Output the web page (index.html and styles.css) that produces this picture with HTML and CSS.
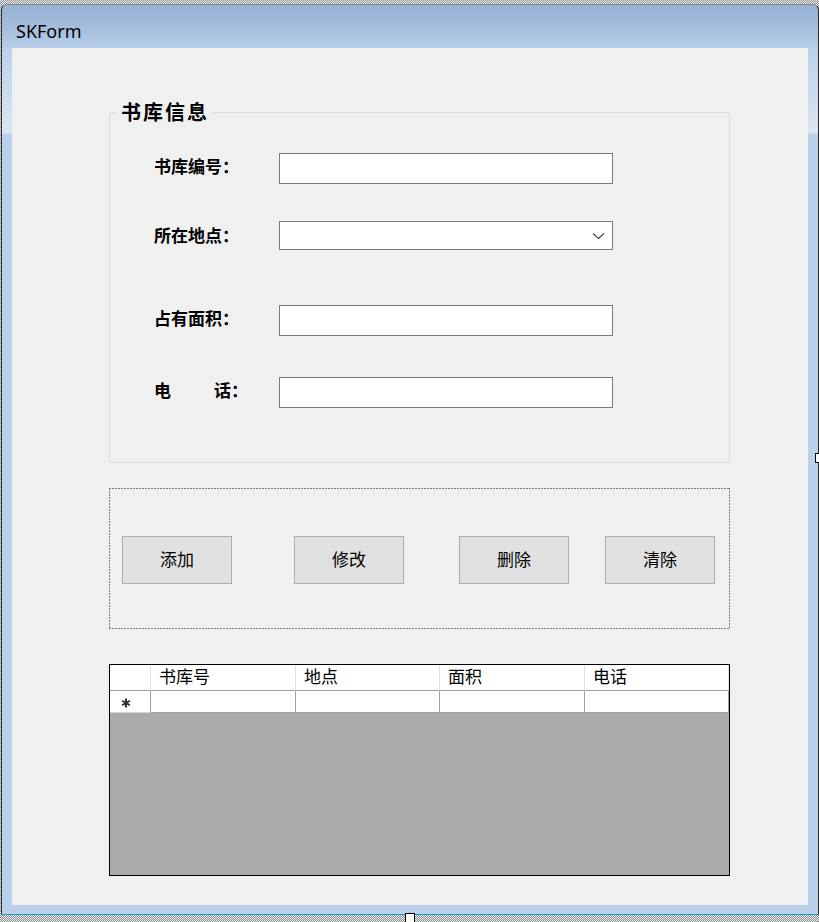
FILE: index.html
```html
<!DOCTYPE html>
<html lang="zh-CN">
<head>
<meta charset="utf-8">
<title>SKForm</title>
<link rel="stylesheet" href="styles.css">
</head>
<body>
<div class="window">
  <div class="titlebar">SKForm</div>
  <div class="client">
    <fieldset class="group">
      <legend>书库信息</legend>
      <div class="row r1">
        <label class="lbl">书库编号<span class="colon">：</span></label>
        <input class="txt" type="text">
      </div>
      <div class="row r2">
        <label class="lbl">所在地点<span class="colon">：</span></label>
        <div class="combo">
          <svg class="chev" width="13" height="8" viewBox="0 0 13 8"><path d="M1 1.5 L6.5 6.5 L12 1.5" fill="none" stroke="#444" stroke-width="1.1"/></svg>
        </div>
      </div>
      <div class="row r3">
        <label class="lbl">占有面积<span class="colon">：</span></label>
        <input class="txt" type="text">
      </div>
      <div class="row r4">
        <label class="lbl">电<span class="gap"></span>话<span class="colon">：</span></label>
        <input class="txt" type="text">
      </div>
    </fieldset>

    <div class="actions">
      <button class="btn">添加</button>
      <button class="btn b2">修改</button>
      <button class="btn b3">删除</button>
      <button class="btn b4">清除</button>
    </div>

    <div class="grid">
      <div class="grow head">
        <div class="cell rh"></div>
        <div class="cell w145">书库号</div>
        <div class="cell w144">地点</div>
        <div class="cell w145">面积</div>
        <div class="cell w144">电话</div>
      </div>
      <div class="grow data">
        <div class="cell rh"><svg width="10" height="10" viewBox="0 0 10 10"><g stroke="#333" stroke-width="2" stroke-linecap="butt"><path d="M5 0.5 V9.5"/><path d="M1.1 2.75 L8.9 7.25"/><path d="M1.1 7.25 L8.9 2.75"/></g></svg></div>
        <div class="cell w145"></div>
        <div class="cell w144"></div>
        <div class="cell w145"></div>
        <div class="cell w144"></div>
      </div>
    </div>
  </div>
</div>
<div class="handle-bottom"></div>
<div class="handle-right"></div>
</body>
</html>
```
FILE: styles.css
```css
html, body {
  margin: 0;
  padding: 0;
}
body {
  width: 819px;
  height: 922px;
  overflow: hidden;
  position: relative;
  background: repeating-conic-gradient(#8a8a8a 0 25%, #f2f2f2 0 50%) 0 0 / 2px 2px;
  font-family: "Noto Sans CJK SC", sans-serif;
  color: #000;
}
.window {
  box-sizing: border-box;
  margin: 4px 0 0 1px;
  width: 818px;
  height: 911px;
  border: 1px solid #2a2a2a;
  border-top-color: #7b8796;
  border-bottom-color: #1f9bd0;
  border-radius: 6px 6px 0 0;
  background: linear-gradient(to bottom,
    #98b3d2 0, #a3bddb 22px, #b6cee8 42px, #bbd2ea 44px,
    #dbe6f3 128px, #b9d1ea 129px, #b9d1ea 100%);
  display: flex;
  flex-direction: column;
}
.titlebar {
  box-sizing: border-box;
  height: 43px;
  padding: 14px 0 0 14px;
  font-family: "Noto Sans", sans-serif;
  font-size: 18px;
  line-height: 24px;
  color: #000;
}
.client {
  box-sizing: border-box;
  margin-left: 10px;
  width: 796px;
  height: 857px;
  background: #f0f0f0;
  padding: 53px 0 0 97px;
}
.group {
  box-sizing: border-box;
  margin: 0;
  padding: 0 0 54px 0;
  width: 621px;
  border: 1px solid #dcdcdc;
  min-inline-size: auto;
}
.group legend {
  margin-left: 6px;
  padding: 0 3px 0 5px;
  font-size: 20px;
  line-height: 22px;
  font-weight: bold;
  letter-spacing: 2px;
}
.row {
  display: flex;
  align-items: center;
  padding-left: 44px;
}
.r1 { margin-top: 30px; }
.r2 { margin-top: 37px; }
.r3 { margin-top: 55px; }
.r4 { margin-top: 41px; }
.lbl {
  width: 125px;
  flex: none;
  font-size: 17px;
  line-height: 20px;
  font-weight: bold;
  margin-bottom: 6px;
  white-space: nowrap;
}
.r2 .lbl { margin-bottom: 2px; }
.colon {
  display: inline-block;
  width: 17px;
  text-align: center;
}
.gap {
  display: inline-block;
  width: 43px;
}
.txt {
  box-sizing: border-box;
  width: 334px;
  height: 31px;
  margin: 0;
  padding: 0 4px;
  border: 1px solid #7a7a7a;
  background: #fff;
  outline: none;
  font-size: 16px;
}
.combo {
  box-sizing: border-box;
  width: 334px;
  height: 29px;
  border: 1px solid #7a7a7a;
  background: #fff;
  display: flex;
  align-items: center;
  justify-content: flex-end;
  padding: 1px 7px 0 0;
}
.chev { display: block; }
.actions {
  box-sizing: border-box;
  margin-top: 25px;
  width: 621px;
  height: 141px;
  padding: 48px 0 0 13px;
  display: flex;
  align-items: flex-start;
  background:
    repeating-linear-gradient(90deg, #7c7c7c 0 2px, transparent 2px 3px) 0 0 / 100% 1px no-repeat,
    repeating-linear-gradient(90deg, #7c7c7c 0 2px, transparent 2px 3px) 0 100% / 100% 1px no-repeat,
    repeating-linear-gradient(180deg, #7c7c7c 0 2px, transparent 2px 3px) 0 0 / 1px 100% no-repeat,
    repeating-linear-gradient(180deg, #7c7c7c 0 2px, transparent 2px 3px) 100% 0 / 1px 100% no-repeat;
}
.btn {
  box-sizing: border-box;
  width: 110px;
  height: 48px;
  margin: 0;
  padding: 0 0 4px 0;
  border: 1px solid #adadad;
  background: #e1e1e1;
  font-family: "Noto Sans CJK SC", sans-serif;
  font-size: 17px;
  color: #000;
}
.b2 { margin-left: 62px; }
.b3 { margin-left: 55px; }
.b4 { margin-left: 36px; }
.grid {
  box-sizing: border-box;
  margin-top: 35px;
  width: 621px;
  height: 212px;
  border: 1px solid #000;
  background: #ababab;
}
.grow {
  display: flex;
  background: #fff;
}
.cell {
  box-sizing: border-box;
  flex: none;
}
.rh { width: 41px; }
.w145 { width: 145px; }
.w144 { width: 144px; }
.head .cell {
  height: 26px;
  border-right: 1px solid #e2e2e2;
  border-bottom: 1px solid #a0a0a0;
  padding-left: 8px;
  font-size: 17px;
  line-height: 22px;
}
.data .cell {
  height: 22px;
  border-right: 1px solid #a0a0a0;
  border-bottom: 1px solid #a0a0a0;
}
.data .rh {
  border-bottom-color: #d8d8d8;
  display: flex;
  align-items: center;
  padding: 3px 0 0 11px;
}
.data .rh svg { display: block; }
.handle-bottom {
  position: absolute;
  left: 405px;
  top: 913px;
  width: 10px;
  height: 12px;
  box-sizing: border-box;
  background: #fff;
  border: 1px solid #000;
}
.handle-right {
  position: absolute;
  left: 815px;
  top: 453px;
  width: 8px;
  height: 10px;
  box-sizing: border-box;
  background: #fff;
  border: 1px solid #000;
}
```
